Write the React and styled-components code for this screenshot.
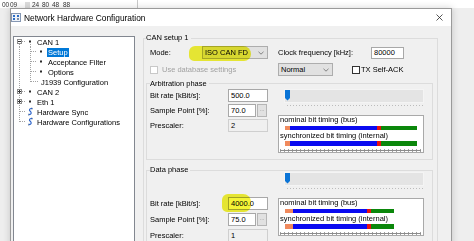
import React from "react";
import styled, { createGlobalStyle } from "styled-components";

const GlobalStyle = createGlobalStyle`
  html, body { margin: 0; padding: 0; background: #eeeeee; }
  body { font-family: "Liberation Sans", Arial, sans-serif; }
  * { box-sizing: border-box; }
`;

const FS = "7.5px";

const Desktop = styled.div`
  position: relative;
  width: 474px;
  height: 241px;
  overflow: hidden;
  background: #eeeeee;
`;

const BackStrip = styled.div`
  height: 8px;
  background: #fff;
  display: flex;
  align-items: flex-end;
  font-size: 6.5px;
  line-height: 7px;
  color: #333;
`;

const HexGroup = styled.div`
  width: 138px;
  height: 8px;
  display: flex;
  align-items: flex-end;
  padding-left: 2px;
  border-right: 1px solid #c9c9c9;
`;

const HexCell = styled.span`
  width: ${(p) => p.$w}px;
  flex: none;
`;

const HexMark = styled.span`
  width: 5px;
  height: 6px;
  margin-right: 2px;
  flex: none;
  background: #dcdcdc;
`;

const Dialog = styled.div`
  position: absolute;
  left: 10px;
  top: 8px;
  width: 442px;
  height: 250px;
  border: 1px solid #9a9a9a;
  background: #f0f0f0;
  box-shadow: 0 0 7px rgba(0, 0, 0, 0.18);
  display: flex;
  flex-direction: column;
`;

const TitleBar = styled.div`
  height: 17px;
  flex: none;
  background: #fff;
  display: flex;
  align-items: center;
  padding: 0 8px 0 0;
`;

const TitleText = styled.span`
  flex: 1;
  margin-left: 3px;
  font-size: 8.4px;
  color: #000;
  white-space: nowrap;
`;

const Body = styled.div`
  flex: 1;
  display: flex;
  gap: 8px;
  padding: 10px 13px 0 2px;
`;

const Tree = styled.div`
  width: 122px;
  flex: none;
  background: #fff;
  border: 1px solid #828790;
  font-size: ${FS};
  color: #000;
`;

const TreeRow = styled.div`
  display: flex;
  align-items: center;
  height: 10px;
`;

const GuideSvg = styled.svg`
  display: block;
  flex: none;
`;

const TreeLabel = styled.span`
  line-height: 9px;
  height: 9px;
  padding: 0 1px;
  margin-left: ${(p) => (p.$flush ? 0 : -1)}px;
  white-space: nowrap;
  background: ${(p) => (p.$selected ? "#0078d7" : "transparent")};
  color: ${(p) => (p.$selected ? "#fff" : "#000")};
`;

const OuterGroup = styled.fieldset`
  flex: 1;
  min-width: 0;
  margin: -2px 0 0 0;
  border: 1px solid #dcdcdc;
  border-bottom: none;
  padding: 0 4px 0 2px;
`;

const Legend = styled.legend`
  padding: 0 2px 0 0;
  font-size: ${FS};
  line-height: 8px;
  color: #000;
  white-space: nowrap;
`;

const FormRow = styled.div`
  display: flex;
  align-items: center;
  height: 13px;
  padding-left: 4px;
  margin-top: ${(p) => p.$mt}px;
`;

const Label = styled.span`
  width: ${(p) => p.$w}px;
  flex: none;
  font-size: ${FS};
  white-space: nowrap;
  color: ${(p) => (p.$disabled ? "#a2a2a2" : "#000")};
  margin-left: ${(p) => p.$ml || 0}px;
`;

const Combo = styled.div`
  position: relative;
  width: ${(p) => p.$w}px;
  height: 13px;
  flex: none;
  display: flex;
  align-items: center;
  justify-content: space-between;
  background: #e1e1e1;
  border: 1px solid #adadad;
  padding: 0 3px 0 2px;
  font-size: ${FS};
  color: #000;
  white-space: nowrap;
  margin-left: ${(p) => p.$ml || 0}px;
`;

const TextBox = styled.div`
  position: relative;
  width: ${(p) => p.$w}px;
  height: ${(p) => p.$h || 13}px;
  flex: none;
  border: 1px solid ${(p) => (p.$disabled ? "#cfcfcf" : "#a8a8a8")};
  background: ${(p) => (p.$disabled ? "#f0f0f0" : "#fff")};
  font-size: ${FS};
  line-height: ${(p) => (p.$h || 13) - 2}px;
  padding-left: 2px;
  color: #000;
`;

const EllipsisButton = styled.div`
  width: 10px;
  height: 13px;
  flex: none;
  margin-left: 1px;
  background: #e1e1e1;
  border: 1px solid #b5b5b5;
  color: #8a8a8a;
  font-size: 6px;
  line-height: 8px;
  text-align: center;
`;

const CheckBox = styled.span`
  width: 8px;
  height: 8px;
  flex: none;
  background: #fff;
  border: 1px solid ${(p) => (p.$disabled ? "#c8c8c8" : "#333")};
  margin-right: ${(p) => p.$mr}px;
`;

const CheckField = styled.div`
  display: flex;
  align-items: center;
  width: ${(p) => p.$w || "auto"};
  flex: none;
  margin-left: ${(p) => p.$ml || 0}px;
`;

const Highlight = styled.span`
  position: absolute;
  left: ${(p) => p.$l}px;
  top: ${(p) => p.$t}px;
  width: ${(p) => p.$w}px;
  height: ${(p) => p.$h}px;
  background: #f4f436;
  mix-blend-mode: multiply;
  border-radius: 6px 8px 7px 5px;
  pointer-events: none;
`;

const PhaseGroup = styled.fieldset`
  min-width: 0;
  margin: ${(p) => p.$mt}px 0 0 0;
  border: 1px solid #dcdcdc;
  padding: 0 8px ${(p) => p.$pb}px 3px;
`;

const PhaseBody = styled.div`
  display: flex;
  align-items: flex-start;
  gap: 10px;
  padding-top: ${(p) => p.$pt}px;
`;

const Fields = styled.div`
  width: 118px;
  flex: none;
  display: flex;
  flex-direction: column;
  gap: ${(p) => p.$gap}px;
  margin-top: ${(p) => p.$mt}px;
`;

const FieldRow = styled.div`
  display: flex;
  align-items: center;
  height: 13px;
`;

const Graphs = styled.div`
  width: 146px;
  flex: none;
  margin-top: ${(p) => p.$mt}px;
`;

const SliderBlock = styled.div`
  height: 25.5px;
  padding-left: 6px;
`;

const Track = styled.div`
  position: relative;
  height: 14px;
  background: #e4e4e4;
  border: 1px solid #f4f4f4;
`;

const Thumb = styled.svg`
  position: absolute;
  left: 0;
  top: 0;
  display: block;
`;

const Ticks = styled.div`
  height: 1px;
  margin: 2px 0 0 3px;
  background: repeating-linear-gradient(90deg, #bcbcbc 0 1px, transparent 1px 3px);
`;

const TimingBox = styled.div`
  height: 38px;
  border: 1px solid #a9a9a9;
  background: #fff;
  padding-left: 1px;
  overflow: hidden;
`;

const Caption = styled.div`
  height: 8px;
  line-height: 8px;
  font-size: ${FS};
  color: #000;
  white-space: nowrap;
  margin-top: ${(p) => p.$mt || 0}px;
`;

const Bar = styled.div`
  display: flex;
  height: 4.5px;
  margin: ${(p) => p.$mt}px 0 0 5px;
`;

const Seg = styled.div`
  width: ${(p) => p.$w}px;
  flex: none;
  background: ${(p) => p.$c};
`;

const Ruler = styled.div`
  height: 3px;
  margin: 3px 2px 0 0;
  background:
    linear-gradient(#8c8c8c, #8c8c8c) center / 100% 1px no-repeat,
    repeating-linear-gradient(90deg, #a0a0a0 0 1px, transparent 1px 4px);
`;

const COLORS = { o: "#f08a5d", b: "#0a0af0", r: "#e81010", g: "#0b870b" };

function Guide({ kind, w = 11, cx = 4, expander }) {
  const dot = { stroke: "#a3a3a3", strokeWidth: 1, strokeDasharray: "1 1" };
  const x = cx + 0.5;
  const parts = [];
  if (kind === "pipe" || kind === "tee") parts.push(<line key="v" x1={x} y1={0} x2={x} y2={10} style={dot} />);
  if (kind === "elbow") parts.push(<line key="v" x1={x} y1={0} x2={x} y2={5} style={dot} />);
  if (kind === "first") parts.push(<line key="v" x1={x} y1={5} x2={x} y2={10} style={dot} />);
  if (kind === "tee" || kind === "elbow" || kind === "first")
    parts.push(<line key="h" x1={cx + 1} y1={4.5} x2={w} y2={4.5} style={dot} />);
  if (kind === "stub") parts.push(<line key="h" x1={0} y1={4.5} x2={1} y2={4.5} style={dot} />);
  if (kind === "bullet" || kind === "bulletDown")
    parts.push(<rect key="b" x={3} y={3.5} width={2} height={2} fill="#2d2d2d" />);
  if (kind === "bulletDown") parts.push(<line key="d" x1={4.5} y1={7} x2={4.5} y2={10} style={dot} />);
  if (kind === "sync")
    parts.push(
      <g key="s">
        <path d="M6.2 1.6 C3.6 1.2 2.6 3 4.2 4.3 C5.8 5.6 5.6 7.8 2.6 7.6" fill="none" stroke="#2a62c9" strokeWidth="1.1" />
        <path d="M5.6 0.6 L6.8 1.6 L5.6 2.6" fill="none" stroke="#6d7f99" strokeWidth="0.7" />
        <path d="M3.2 6.6 L2 7.6 L3.2 8.6" fill="none" stroke="#6d7f99" strokeWidth="0.7" />
      </g>
    );
  if (expander) {
    parts.push(<rect key="e" x={cx - 1.5} y={2.5} width={4} height={4} fill="#fff" stroke="#8e8e8e" />);
    parts.push(<line key="m" x1={cx - 1} y1={4.5} x2={cx + 2} y2={4.5} stroke="#333" />);
    if (expander === "plus") parts.push(<line key="p" x1={x} y1={3} x2={x} y2={6} stroke="#333" />);
  }
  return (
    <GuideSvg width={w} height={10} viewBox={`0 0 ${w} 10`}>
      {parts}
    </GuideSvg>
  );
}

const treeRows = [
  { g0: "first", exp: "minus", g1: "bulletDown", label: "CAN 1" },
  { g0: "pipe", g1: "tee", g2: "bullet", label: "Setup", selected: true },
  { g0: "pipe", g1: "tee", g2: "bullet", label: "Acceptance Filter" },
  { g0: "pipe", g1: "tee", g2: "bullet", label: "Options" },
  { g0: "pipe", g1: "elbow", g2: "stub", label: "J1939 Configuration", flush: true },
  { g0: "tee", exp: "plus", g1: "bullet", label: "CAN 2" },
  { g0: "tee", exp: "plus", g1: "bullet", label: "Eth 1" },
  { g0: "tee", g1: "sync", label: "Hardware Sync" },
  { g0: "elbow", g1: "sync", label: "Hardware Configurations" },
];

function TimingChart({ bars }) {
  const bar = (mt) => (
    <Bar $mt={mt}>
      {bars.map(([c, w], i) => (
        <Seg key={i} $c={COLORS[c]} $w={w} />
      ))}
    </Bar>
  );
  return (
    <TimingBox>
      <Caption>nominal bit timing (bus)</Caption>
      {bar(2)}
      <Caption $mt={1.5}>synchronized bit timing (internal)</Caption>
      {bar(1.5)}
      <Ruler />
    </TimingBox>
  );
}

function Slider() {
  return (
    <SliderBlock>
      <Track>
        <Thumb width="5" height="11" viewBox="0 0 5 11">
          <path d="M0 0 H5 V8 L2.5 10.5 L0 8 Z" fill="#0a74d6" />
        </Thumb>
      </Track>
      <Ticks />
    </SliderBlock>
  );
}

function Phase({ title, mt, pb, pt, graphsMt, fieldsMt, gap, bitRate, sample, prescaler, highlight, bars }) {
  return (
    <PhaseGroup $mt={mt} $pb={pb}>
      <Legend>{title}</Legend>
      <PhaseBody $pt={pt}>
        <Fields $mt={fieldsMt} $gap={gap}>
          <FieldRow>
            <Label $w={78}>Bit rate [kBit/s]:</Label>
            <TextBox $w={40}>
              {bitRate}
              {highlight && <Highlight $l={-7} $t={-4} $w={29} $h={18} />}
            </TextBox>
          </FieldRow>
          <FieldRow>
            <Label $w={78}>Sample Point [%]:</Label>
            <TextBox $w={28}>{sample}</TextBox>
            <EllipsisButton>...</EllipsisButton>
          </FieldRow>
          <FieldRow>
            <Label $w={78}>Prescaler:</Label>
            <TextBox $w={40} $disabled>
              {prescaler}
            </TextBox>
          </FieldRow>
        </Fields>
        <Graphs $mt={graphsMt}>
          <Slider />
          <TimingChart bars={bars} />
        </Graphs>
      </PhaseBody>
    </PhaseGroup>
  );
}

function Chevron() {
  return (
    <svg width="6" height="4" viewBox="0 0 6 4" style={{ display: "block" }}>
      <path d="M0.5 0.8 L3 3.2 L5.5 0.8" fill="none" stroke="#6a6a6a" strokeWidth="0.8" />
    </svg>
  );
}

export default function App() {
  return (
    <Desktop>
      <GlobalStyle />
      <BackStrip>
        <HexGroup>
          <HexCell $w={8}>00</HexCell>
          <HexCell $w={15}>09</HexCell>
          <HexMark />
          <HexCell $w={10}>24</HexCell>
          <HexCell $w={10}>80</HexCell>
          <HexCell $w={11}>48</HexCell>
          <HexCell $w={10}>88</HexCell>
        </HexGroup>
      </BackStrip>
      <Dialog>
        <TitleBar>
          <svg width="10" height="9" viewBox="0 0 10 9" style={{ display: "block", flex: "none" }}>
            <rect x="0.5" y="0.5" width="9" height="8" fill="#eef2f8" stroke="#8597b3" />
            <rect x="2" y="2" width="2" height="2" fill="#2b6cc4" />
            <rect x="6" y="2" width="2" height="2" fill="#2b6cc4" />
            <rect x="2" y="5" width="2" height="2" fill="#2b6cc4" />
            <rect x="6" y="5" width="2" height="2" fill="#7d8fa9" />
          </svg>
          <TitleText>Network Hardware Configuration</TitleText>
          <svg width="7" height="7" viewBox="0 0 7 7" style={{ display: "block", flex: "none" }}>
            <path d="M0.5 0.5 L6.5 6.5 M6.5 0.5 L0.5 6.5" stroke="#2b2b2b" strokeWidth="0.8" />
          </svg>
        </TitleBar>
        <Body>
          <Tree>
            {treeRows.map((r) => (
              <TreeRow key={r.label}>
                <Guide kind={r.g0} w={12} cx={5} expander={r.exp} />
                <Guide kind={r.g1} w={11} cx={4} />
                {r.g2 && <Guide kind={r.g2} w={r.g2 === "stub" ? 3 : 11} cx={4} />}
                <TreeLabel $selected={r.selected} $flush={r.flush}>
                  {r.label}
                </TreeLabel>
              </TreeRow>
            ))}
          </Tree>
          <OuterGroup>
            <Legend>CAN setup 1</Legend>
            <FormRow $mt={4}>
              <Label $w={52}>Mode:</Label>
              <Combo $w={66}>
                <span>ISO CAN FD</span>
                <Chevron />
                <Highlight $l={-14} $t={-1} $w={62} $h={15} />
              </Combo>
              <Label $w={93} $ml={10}>
                Clock frequency [kHz]:
              </Label>
              <TextBox $w={33} $h={12}>
                80000
              </TextBox>
            </FormRow>
            <FormRow $mt={4}>
              <CheckField $w="128px">
                <CheckBox $disabled $mr={4} />
                <Label $disabled>Use database settings</Label>
              </CheckField>
              <Combo $w={55}>
                <span>Normal</span>
                <Chevron />
              </Combo>
              <CheckField $ml={19}>
                <CheckBox $mr={1} />
                <Label>TX Self-ACK</Label>
              </CheckField>
            </FormRow>
            <Phase
              title="Arbitration phase"
              mt={3.5}
              pb={6}
              pt={1.5}
              graphsMt={0}
              fieldsMt={0}
              gap={2}
              bitRate="500.0"
              sample="70.0"
              prescaler="2"
              bars={[["o", 4.5], ["b", 87], ["r", 4], ["g", 36.5]]}
            />
            <Phase
              title="Data phase"
              mt={6.5}
              pb={6}
              pt={0}
              graphsMt={-2}
              fieldsMt={23}
              gap={3}
              bitRate="4000.0"
              sample="75.0"
              prescaler="1"
              highlight
              bars={[["o", 8], ["b", 74], ["r", 3.5], ["g", 23.5]]}
            />
          </OuterGroup>
        </Body>
      </Dialog>
    </Desktop>
  );
}
